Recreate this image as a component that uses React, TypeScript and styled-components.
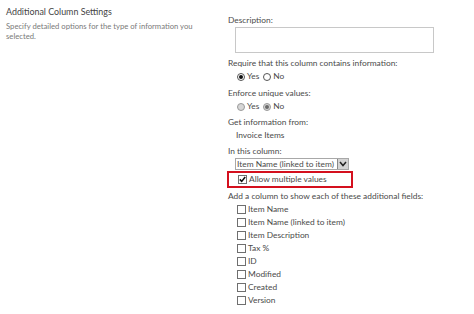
import React from "react";
import styled, { createGlobalStyle } from "styled-components";

const Global = createGlobalStyle`
  html, body { margin: 0; padding: 0; background: #fff; }
  body { font-family: Lato, "Open Sans", sans-serif; color: #444; }
`;

const Page = styled.div`
  display: flex;
  width: 474px;
  height: 314px;
  overflow: hidden;
`;

const LeftCol = styled.div`
  width: 228px;
  flex-shrink: 0;
  padding: 5px 0 0 6px;
  box-sizing: border-box;
`;

const SectionTitle = styled.div`
  font-size: 8.9px;
  line-height: 13px;
  color: #444;
`;

const SectionDesc = styled.div`
  margin-top: 3px;
  font-size: 7.7px;
  line-height: 10px;
  color: #7a7a7a;
  width: 200px;
`;

const RightCol = styled.div`
  display: flex;
  flex-direction: column;
  padding-top: 14px;
  font-size: 8.4px;
  line-height: 13px;
  color: #4a4a4a;
`;

const Label = styled.div<{ $mt?: number }>`
  margin-top: ${(p) => p.$mt ?? 0}px;
  white-space: nowrap;
`;

const Indented = styled.div<{ $mt?: number }>`
  margin-left: 8px;
  margin-top: ${(p) => p.$mt ?? 0}px;
  white-space: nowrap;
`;

const TextArea = styled.div`
  margin-left: 7px;
  width: 199px;
  height: 26px;
  border: 1px solid #c8c8c8;
  box-sizing: border-box;
  background: #fff;
`;

const RadioRow = styled.div`
  display: flex;
  align-items: center;
  margin-left: 9px;
  height: 13px;
`;

const RadioItem = styled.span`
  display: inline-flex;
  align-items: center;
  margin-right: 4px;
  gap: 2px;
`;

const RadioCircle = styled.span<{ $checked?: boolean; $disabled?: boolean }>`
  position: relative;
  width: 8px;
  height: 8px;
  border-radius: 50%;
  border: 1px solid ${(p) => (p.$disabled ? "#9a9a9a" : "#555")};
  background: ${(p) => (p.$disabled ? "#d6d6d6" : "#fff")};
  box-sizing: border-box;
  &::after {
    content: "";
    display: ${(p) => (p.$checked ? "block" : "none")};
    position: absolute;
    left: 1px;
    top: 1px;
    width: 4px;
    height: 4px;
    border-radius: 50%;
    background: ${(p) => (p.$disabled ? "#6a6a6a" : "#111")};
  }
`;

const Select = styled.div`
  display: flex;
  align-items: stretch;
  margin-left: 7px;
  width: 114px;
  height: 12px;
  border: 1px solid #a8a8a8;
  box-sizing: border-box;
  line-height: 10px;
  background: #fff;
`;

const SelectText = styled.span`
  flex: 1;
  padding-left: 1px;
  white-space: nowrap;
  overflow: hidden;
`;

const SelectButton = styled.span`
  width: 10px;
  border-left: 1px solid #888;
  background: #d4d4d4;
  display: flex;
  align-items: center;
  justify-content: center;
`;

const Highlight = styled.div`
  margin-top: 1px;
  margin-left: -1px;
  width: 126px;
  height: 17px;
  border: 2px solid #d4101e;
  box-sizing: border-box;
  display: flex;
  align-items: center;
  gap: 2px;
  padding-left: 9px;
  white-space: nowrap;
`;

const CheckRow = styled.div`
  display: flex;
  align-items: center;
  gap: 2px;
  margin-left: 9px;
  height: 13px;
  white-space: nowrap;
`;

const CheckBox = styled.span`
  width: 9px;
  height: 9px;
  border: 1px solid #6f6f6f;
  box-sizing: border-box;
  background: #fff;
  display: inline-flex;
  align-items: center;
  justify-content: center;
  flex-shrink: 0;
`;

const Check = () => (
  <svg width="7" height="7" viewBox="0 0 7 7">
    <path d="M0.8 3.4 L2.7 5.4 L6.2 1" fill="none" stroke="#111" strokeWidth="1.6" />
  </svg>
);

const Chevron = () => (
  <svg width="8" height="6" viewBox="0 0 8 6">
    <path d="M1 1 L4 4.5 L7 1" fill="none" stroke="#222" strokeWidth="1.5" />
  </svg>
);

const fields = [
  "Item Name",
  "Item Name (linked to item)",
  "Item Description",
  "Tax %",
  "ID",
  "Modified",
  "Created",
  "Version",
];

export default function App() {
  return (
    <>
      <Global />
      <Page>
        <LeftCol>
          <SectionTitle>Additional Column Settings</SectionTitle>
          <SectionDesc>
            Specify detailed options for the type of information you selected.
          </SectionDesc>
        </LeftCol>
        <RightCol>
          <Label>Description:</Label>
          <TextArea />
          <Label $mt={4}>Require that this column contains information:</Label>
          <RadioRow>
            <RadioItem>
              <RadioCircle $checked />
              Yes
            </RadioItem>
            <RadioItem>
              <RadioCircle />
              No
            </RadioItem>
          </RadioRow>
          <Label $mt={4}>Enforce unique values:</Label>
          <RadioRow>
            <RadioItem>
              <RadioCircle $disabled />
              Yes
            </RadioItem>
            <RadioItem>
              <RadioCircle $checked $disabled />
              No
            </RadioItem>
          </RadioRow>
          <Label $mt={3}>Get information from:</Label>
          <Indented>Invoice Items</Indented>
          <Label $mt={3}>In this column:</Label>
          <Select>
            <SelectText>Item Name (linked to item)</SelectText>
            <SelectButton>
              <Chevron />
            </SelectButton>
          </Select>
          <Highlight>
            <CheckBox>
              <Check />
            </CheckBox>
            <span>Allow multiple values</span>
          </Highlight>
          <Label $mt={2}>Add a column to show each of these additional fields:</Label>
          {fields.map((f) => (
            <CheckRow key={f}>
              <CheckBox />
              {f}
            </CheckRow>
          ))}
        </RightCol>
      </Page>
    </>
  );
}
